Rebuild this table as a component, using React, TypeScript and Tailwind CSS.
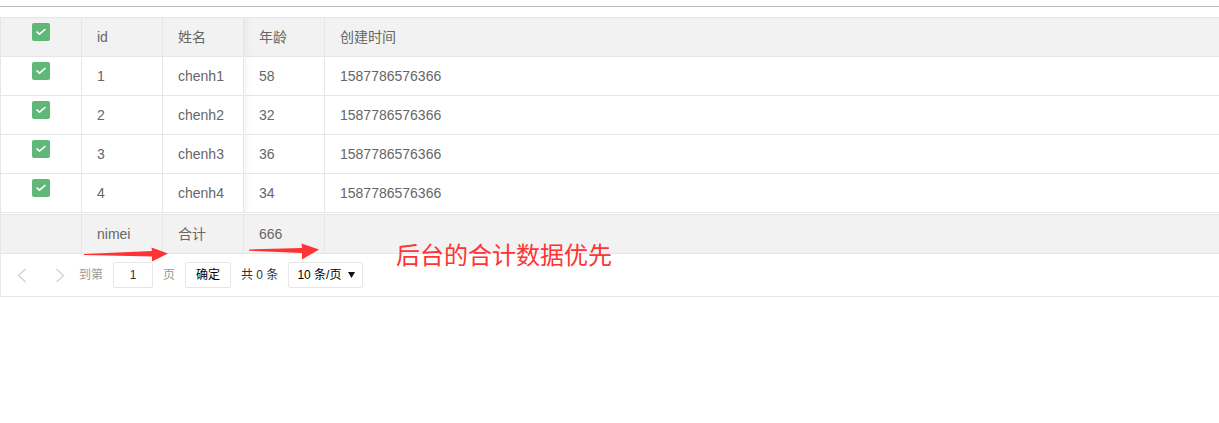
import React from 'react';

const rows = [
  { id: 1, name: 'chenh1', age: 58, time: '1587786576366' },
  { id: 2, name: 'chenh2', age: 32, time: '1587786576366' },
  { id: 3, name: 'chenh3', age: 36, time: '1587786576366' },
  { id: 4, name: 'chenh4', age: 34, time: '1587786576366' },
];

const Checkbox = () => (
  <div className="w-[18px] h-[18px] rounded-[2px] bg-[#5FB878]">
    <svg width="18" height="18" viewBox="0 0 18 18">
      <polyline points="4.5,8.5 7.5,11.2 13.5,6" fill="none" stroke="#fff" strokeWidth="1.6" />
    </svg>
  </div>
);

const Chevron = ({ dir }: { dir: 'left' | 'right' }) => (
  <svg width="10" height="15" viewBox="0 0 10 15">
    <polyline
      points={dir === 'left' ? '8.5,1 1.5,7.5 8.5,14' : '1.5,1 8.5,7.5 1.5,14'}
      fill="none"
      stroke="#d2d2d2"
      strokeWidth="1.4"
    />
  </svg>
);

export default function App() {
  const cell = 'w-[81px] shrink-0 border-r border-[#e6e6e6] flex items-center pl-[15px]';
  const shadowCell = 'shadow-[inset_8px_0_8px_-8px_rgba(0,0,0,0.08)]';

  return (
    <div
      className="relative w-[1219px] h-[423px] bg-white overflow-hidden text-[14px] text-[#666]"
      style={{ fontFamily: '"Liberation Sans", "Noto Sans CJK SC", sans-serif' }}
    >
      <div className="h-[6px]" />
      <div className="h-px bg-[#b8b8b8]" />
      <div className="h-[10px]" />

      {/* table */}
      <div className="border-l border-t border-[#e6e6e6]">
        {/* header */}
        <div className="flex h-[39px] bg-[#f2f2f2] border-b border-[#e6e6e6]">
          <div className="w-[81px] shrink-0 border-r border-[#e6e6e6] flex justify-center pt-[5px]">
            <Checkbox />
          </div>
          <div className={cell}>id</div>
          <div className={cell}>姓名</div>
          <div className={`${cell} ${shadowCell}`}>年龄</div>
          <div className="flex-1 flex items-center pl-[15px]">创建时间</div>
        </div>

        {/* body */}
        {rows.map((r) => (
          <div key={r.id} className="flex h-[39px] border-b border-[#e6e6e6]">
            <div className="w-[81px] shrink-0 border-r border-[#e6e6e6] flex justify-center pt-[5px]">
              <Checkbox />
            </div>
            <div className={cell}>{r.id}</div>
            <div className={cell}>{r.name}</div>
            <div className={`${cell} ${shadowCell}`}>{r.age}</div>
            <div className="flex-1 flex items-center pl-[15px]">{r.time}</div>
          </div>
        ))}

        {/* total row */}
        <div className="h-px" />
        <div className="flex h-[40px] bg-[#f2f2f2] border-t border-b border-[#e6e6e6]">
          <div className="w-[81px] shrink-0 border-r border-[#e6e6e6]" />
          <div className={cell}>nimei</div>
          <div className={cell}>合计</div>
          <div className={cell}>666</div>
          <div className="flex-1" />
        </div>

        {/* pager */}
        <div className="flex items-center h-[43px] border-b border-[#e6e6e6] pl-[16px] text-[12px]">
          <Chevron dir="left" />
          <div className="ml-[28px]">
            <Chevron dir="right" />
          </div>
          <span className="ml-[14px] text-[#999]">到第</span>
          <div className="ml-[10px] w-[40px] h-[26px] border border-[#e6e6e6] rounded-[2px] flex items-center justify-center text-[#333]">
            1
          </div>
          <span className="ml-[10px] text-[#999]">页</span>
          <div className="ml-[10px] w-[46px] h-[26px] border border-[#e6e6e6] rounded-[2px] flex items-center justify-center text-[#000]">
            确定
          </div>
          <span className="ml-[10px] text-[#333]">共 0 条</span>
          <div className="ml-[10px] w-[75px] h-[26px] border border-[#e6e6e6] rounded-[2px] flex items-center pl-[8px] text-[#000]">
            <span>10 条/页</span>
            <svg className="ml-auto mr-[7px]" width="7" height="6" viewBox="0 0 7 6">
              <polygon points="0,0 7,0 3.5,6" fill="#111" />
            </svg>
          </div>
        </div>
      </div>

      {/* annotation arrows */}
      <svg className="absolute left-0 top-0 pointer-events-none" width="1219" height="423">
        <polygon
          points="84,254 152,251 151.5,247.5 168,253.5 152,261.5 152,256.5 84,255"
          fill="#ff3333"
        />
        <polygon
          points="249,249.5 302,248 301.5,243.5 319,249.5 302,259.5 302,253 249,250.8"
          fill="#ff3333"
        />
      </svg>
      <div className="absolute left-[396px] top-[240px] text-[24px] leading-[32px] text-[#ff3333] whitespace-nowrap">
        后台的合计数据优先
      </div>
    </div>
  );
}
